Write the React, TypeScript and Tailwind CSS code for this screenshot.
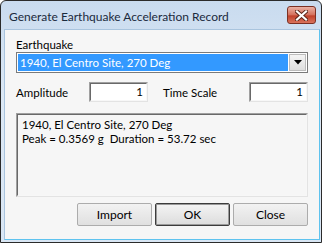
import React from "react";

const font = { fontFamily: 'Lato, "Liberation Sans", Arial, sans-serif' };

function Sunken({ className, children }: { className?: string; children?: React.ReactNode }) {
  return (
    <div className={"border border-t-[#a0a0a0] border-l-[#a0a0a0] border-b-[#e3e3e3] border-r-[#e3e3e3] " + (className ?? "")}>
      <div className="h-full w-full border border-t-[#696969] border-l-[#696969] border-b-[#f7f7f7] border-r-[#f7f7f7]">
        {children}
      </div>
    </div>
  );
}

function Btn({ label, def }: { label: string; def?: boolean }) {
  return (
    <div
      className={
        "h-[23px] w-[75px] flex items-center justify-center text-[12px] text-black rounded-[2px] " +
        (def
          ? "border border-[#3c3c3c] bg-[linear-gradient(#f4f4f4,#dcdcdc)] shadow-[inset_0_0_0_1px_#9a9a9a]"
          : "border border-[#acacac] bg-[linear-gradient(#f2f2f2,#e0e0e0)]")
      }
    >
      {label}
    </div>
  );
}

export default function App() {
  return (
    <div className="w-[324px] h-[243px] bg-white" style={font}>
      <div className="w-[322px] h-[243px] border border-[#2b2b2b] rounded-t-[6px] bg-[linear-gradient(#c9dbef,#dce8f5_40%,#d9e6f4)] flex flex-col">
        <div className="h-[28px] flex items-start justify-between pl-[8px] pr-[5px]">
          <div className="mt-[8px] text-[12px] text-[#1b2a3d] leading-[15px]">Generate Earthquake Acceleration Record</div>
          <div className="mt-[5px] w-[29px] h-[18px] rounded-[3px] border border-[#7c3023] bg-[linear-gradient(#eab1a4,#d4705c_50%,#c0402a_55%,#d9735c)] flex items-center justify-center">
            <svg width="13" height="11" viewBox="0 0 13 11">
              <path d="M2 1.5 L11 9.5 M11 1.5 L2 9.5" stroke="#5a2418" strokeWidth="4" strokeLinecap="square" />
              <path d="M2 1.5 L11 9.5 M11 1.5 L2 9.5" stroke="#ffffff" strokeWidth="2.2" strokeLinecap="square" />
            </svg>
          </div>
        </div>
        <div className="flex-1 ml-[3px] mr-[1px] mb-[2px] border border-[#a9c4de] border-r-[#5ec3ef] border-b-[#5ec3ef] bg-[#f6f6f6] px-[11px] pt-[8px] text-[11.5px] text-black">
          <div className="h-[14px] leading-[14px]">Earthquake</div>
          <div className="h-[21px] w-[292px] flex border border-[#7a7a7a] bg-white p-[1px]">
            <div className="flex-1 bg-[#3399ff] text-white leading-[17px] pl-[2px]">1940, El Centro Site, 270 Deg</div>
            <div className="w-[17px] ml-[1px] border border-[#bcbcbc] bg-[linear-gradient(#f4f4f4,#dedede)] flex items-center justify-center">
              <svg width="8" height="5" viewBox="0 0 8 5"><path d="M0 0H8L4 4.5Z" fill="#000" /></svg>
            </div>
          </div>
          <div className="mt-[9px] h-[20px] flex items-center">
            <div className="w-[73px] pt-[1px]">Amplitude</div>
            <Sunken className="w-[59px] h-[20px] bg-white">
              <div className="text-right pr-[3px] leading-[16px] bg-white">1</div>
            </Sunken>
            <div className="ml-[15px] w-[86px] pt-[1px]">Time Scale</div>
            <Sunken className="w-[59px] h-[20px] bg-white">
              <div className="text-right pr-[3px] leading-[16px] bg-white">1</div>
            </Sunken>
          </div>
          <Sunken className="mt-[11px] w-[292px] h-[84px]">
            <div className="pl-[4px] pt-[3px] leading-[14px]">
              <div>1940, El Centro Site, 270 Deg</div>
              <div>Peak = 0.3569 g&nbsp;&nbsp;Duration = 53.72 sec</div>
            </div>
          </Sunken>
          <div className="mt-[6px] flex justify-end gap-[3px] w-[292px]">
            <Btn label="Import" />
            <Btn label="OK" def />
            <Btn label="Close" />
          </div>
        </div>
      </div>
    </div>
  );
}
